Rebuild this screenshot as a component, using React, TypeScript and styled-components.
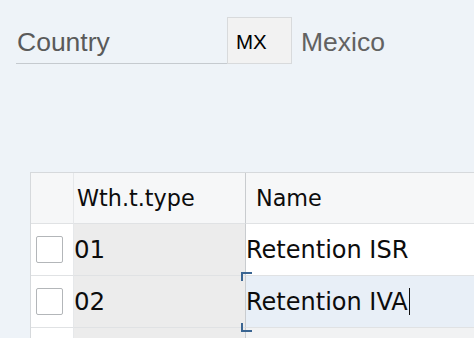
import { Fragment } from "react";
import styled, { createGlobalStyle } from "styled-components";

const GlobalStyle = createGlobalStyle`
  html, body {
    margin: 0;
    padding: 0;
    background: #eef3f8;
    overflow: hidden;
  }
  body {
    font-family: "Liberation Sans", Arial, sans-serif;
  }
`;

const Page = styled.div`
  width: 474px;
  height: 338px;
  padding: 17px 0 0 16px;
  box-sizing: border-box;
  overflow: hidden;
`;

const FieldRow = styled.div`
  display: flex;
  height: 47px;
`;

const Label = styled.div`
  width: 211px;
  box-sizing: border-box;
  border-bottom: 1px solid #c5cacf;
  display: flex;
  align-items: center;
  padding: 4px 0 0 1px;
  font-size: 26.5px;
  color: #5a5a5a;
`;

const KeyBox = styled.div`
  width: 65px;
  box-sizing: border-box;
  border: 1px solid #d8dadc;
  background: #f2f2f2;
  display: flex;
  align-items: center;
  padding: 3px 0 0 8px;
  font-size: 20.5px;
  color: #000;
`;

const KeyText = styled.div`
  display: flex;
  align-items: center;
  padding: 4px 0 0 9px;
  font-size: 26.5px;
  color: #626262;
`;

const Table = styled.div`
  margin: 108px 0 0 14px;
  display: grid;
  grid-template-columns: 43px 172px 260px;
  border-top: 1px solid #d6d9dc;
  border-left: 1px solid #d6d9dc;
  font-family: "DejaVu Sans", Verdana, sans-serif;
  color: #0c0c0c;
`;

const Cell = styled.div<{ $bg: string; $h: number; $pad?: number; $size?: number; $divider?: boolean; $focus?: boolean }>`
  position: ${(p) => (p.$focus ? "relative" : "static")};
  z-index: ${(p) => (p.$focus ? 2 : "auto")};
  height: ${(p) => p.$h}px;
  background: ${(p) => p.$bg};
  border-bottom: 1px solid #e0e2e4;
  border-right: 1px solid ${(p) => (p.$divider ? "#c9cccf" : "#e6e8ea")};
  display: flex;
  align-items: center;
  padding-left: ${(p) => p.$pad ?? 0}px;
  font-size: ${(p) => p.$size ?? 22}px;
  box-sizing: content-box;
  white-space: nowrap;
`;

const Check = styled.div`
  width: 25px;
  height: 25px;
  margin-left: 5px;
  border: 1px solid #b3b6b9;
  border-radius: 2px;
  background: #fff;
`;

const FocusTop = styled.span`
  position: absolute;
  left: -5px;
  top: -4px;
  width: 11px;
  height: 9px;
  border-left: 2px solid #3a6592;
  border-top: 2px solid #3a6592;
  box-sizing: border-box;
`;

const FocusBottom = styled(FocusTop)`
  top: auto;
  bottom: -5px;
  border-top: none;
  border-bottom: 2px solid #3a6592;
`;

const Caret = styled.span`
  display: inline-block;
  width: 1px;
  height: 27px;
  background: #111;
  margin-left: 1px;
`;

const rows = [
  { code: "01", name: "Retention ISR", focused: false },
  { code: "02", name: "Retention IVA", focused: true },
];

export default function App() {
  return (
    <>
      <GlobalStyle />
      <Page>
        <FieldRow>
          <Label>Country</Label>
          <KeyBox>MX</KeyBox>
          <KeyText>Mexico</KeyText>
        </FieldRow>

        <Table>
          <Cell $bg="#f6f7f8" $h={50} />
          <Cell $bg="#f6f7f8" $h={50} $pad={3} $size={22.3} $divider>
            Wth.t.type
          </Cell>
          <Cell $bg="#f6f7f8" $h={50} $pad={10} $size={22.3}>
            Name
          </Cell>

          {rows.map((r) => (
            <Fragment key={r.code}>
              <Cell $bg="#fff" $h={51}>
                <Check />
              </Cell>
              <Cell $bg="#ececec" $h={51} $size={24.5} $divider>
                {r.code}
              </Cell>
              <Cell $bg={r.focused ? "#e8eff7" : "#fff"} $h={51} $size={24} $focus={r.focused}>
                {r.focused && <FocusTop />}
                {r.name}
                {r.focused && <Caret />}
                {r.focused && <FocusBottom />}
              </Cell>
            </Fragment>
          ))}

          <Cell $bg="#fff" $h={51} />
          <Cell $bg="#ececec" $h={51} $divider />
          <Cell $bg="#f1f2f3" $h={51} />
        </Table>
      </Page>
    </>
  );
}
